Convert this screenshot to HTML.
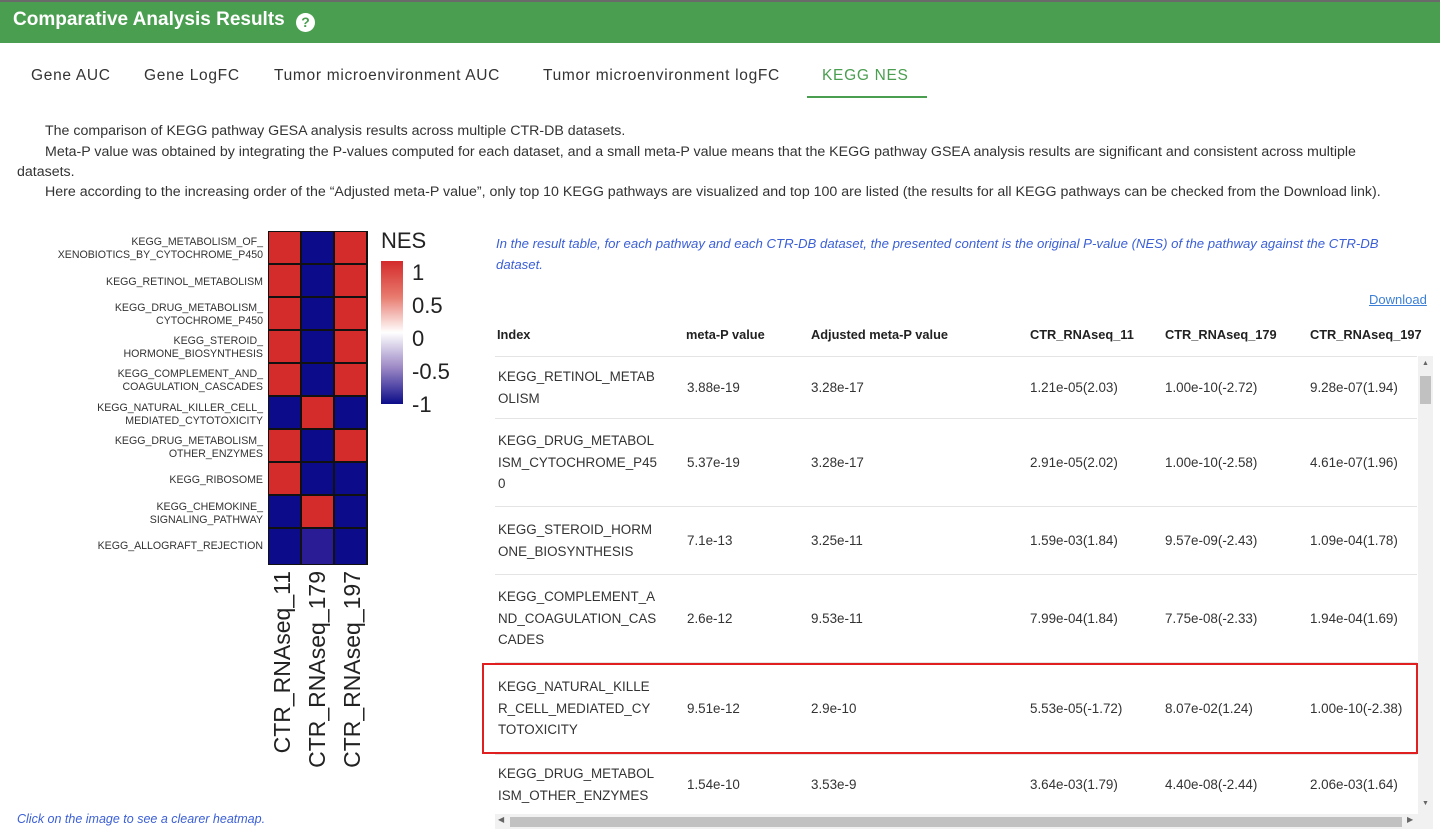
<!DOCTYPE html>
<html><head><meta charset="utf-8"><style>
*{margin:0;padding:0;box-sizing:border-box}
body{width:1440px;height:836px;overflow:hidden;background:#fff;font-family:"Liberation Sans",Arial,sans-serif;color:#333;position:relative}
.a{position:absolute;white-space:nowrap}
.hdr{left:0;top:0;width:1440px;height:43px;background:#4a9e50;border-top:2px solid #6a6a6a}
.tab{top:67px;font-size:15.5px;color:#333;letter-spacing:.7px}
.p{font-size:14.2px;color:#333}
.hl{font-size:10.6px;color:#333;text-align:right;line-height:13px;width:260px;left:3px}
.cell{position:absolute;width:33px;height:33px;border:1px solid #111}
.r{background:#d42b2b}.b{background:#0c0c8a}
.th{top:327px;font-size:12.8px;font-weight:bold;color:#222}
.row{position:absolute;left:495px;width:922px;display:flex;align-items:center;border-top:1px solid #e4e4e4;font-size:13.4px;color:#333}
.row div{position:absolute;line-height:21.5px}
</style></head><body>
<div class="a hdr"></div>
<div class="a" style="left:13px;top:9px;font-size:19px;font-weight:bold;color:#fff">Comparative Analysis Results</div>
<div class="a" style="left:296px;top:13px;width:19px;height:19px;border-radius:50%;background:#fff;color:#4a9e50;font-weight:bold;font-size:14px;text-align:center;line-height:19px">?</div>
<div class="a tab" style="left:31px">Gene AUC</div>
<div class="a tab" style="left:144px">Gene LogFC</div>
<div class="a tab" style="left:274px">Tumor microenvironment AUC</div>
<div class="a tab" style="left:543px">Tumor microenvironment logFC</div>
<div class="a tab" style="left:822px;color:#4a9e50">KEGG NES</div>
<div class="a" style="left:807px;top:96px;width:120px;height:2px;background:#4a9e50"></div>
<div class="a p" style="left:45px;top:123px">The comparison of KEGG pathway GESA analysis results across multiple CTR-DB datasets.</div>
<div class="a p" style="left:45px;top:144px">Meta-P value was obtained by integrating the P-values computed for each dataset, and a small meta-P value means that the KEGG pathway GSEA analysis results are significant and consistent across multiple</div>
<div class="a p" style="left:17px;top:164px">datasets.</div>
<div class="a p" style="left:45px;top:184px">Here according to the increasing order of the “Adjusted meta-P value”, only top 10 KEGG pathways are visualized and top 100 are listed (the results for all KEGG pathways can be checked from the Download link).</div>

<div class="a hl" style="top:236px">KEGG_METABOLISM_OF_<br>XENOBIOTICS_BY_CYTOCHROME_P450</div>
<div class="a hl" style="top:276px">KEGG_RETINOL_METABOLISM</div>
<div class="a hl" style="top:302px">KEGG_DRUG_METABOLISM_<br>CYTOCHROME_P450</div>
<div class="a hl" style="top:335px">KEGG_STEROID_<br>HORMONE_BIOSYNTHESIS</div>
<div class="a hl" style="top:368px">KEGG_COMPLEMENT_AND_<br>COAGULATION_CASCADES</div>
<div class="a hl" style="top:402px">KEGG_NATURAL_KILLER_CELL_<br>MEDIATED_CYTOTOXICITY</div>
<div class="a hl" style="top:435px">KEGG_DRUG_METABOLISM_<br>OTHER_ENZYMES</div>
<div class="a hl" style="top:474px">KEGG_RIBOSOME</div>
<div class="a hl" style="top:501px">KEGG_CHEMOKINE_<br>SIGNALING_PATHWAY</div>
<div class="a hl" style="top:540px">KEGG_ALLOGRAFT_REJECTION</div>

<div class="a" style="left:268px;top:231px;width:100px;height:334px;border:1px solid #111">
<div class="cell r" style="left:-1px;top:-1px"></div><div class="cell b" style="left:32px;top:-1px"></div><div class="cell r" style="left:65px;top:-1px"></div>
<div class="cell r" style="left:-1px;top:32px"></div><div class="cell b" style="left:32px;top:32px"></div><div class="cell r" style="left:65px;top:32px"></div>
<div class="cell r" style="left:-1px;top:65px"></div><div class="cell b" style="left:32px;top:65px"></div><div class="cell r" style="left:65px;top:65px"></div>
<div class="cell r" style="left:-1px;top:98px"></div><div class="cell b" style="left:32px;top:98px"></div><div class="cell r" style="left:65px;top:98px"></div>
<div class="cell r" style="left:-1px;top:131px"></div><div class="cell b" style="left:32px;top:131px"></div><div class="cell r" style="left:65px;top:131px"></div>
<div class="cell b" style="left:-1px;top:164px"></div><div class="cell r" style="left:32px;top:164px"></div><div class="cell b" style="left:65px;top:164px"></div>
<div class="cell r" style="left:-1px;top:197px"></div><div class="cell b" style="left:32px;top:197px"></div><div class="cell r" style="left:65px;top:197px"></div>
<div class="cell r" style="left:-1px;top:230px"></div><div class="cell b" style="left:32px;top:230px"></div><div class="cell b" style="left:65px;top:230px"></div>
<div class="cell b" style="left:-1px;top:263px"></div><div class="cell r" style="left:32px;top:263px"></div><div class="cell b" style="left:65px;top:263px"></div>
<div class="cell b" style="left:-1px;top:296px;height:37px"></div><div class="cell" style="left:32px;top:296px;height:37px;background:#2a1c94"></div><div class="cell b" style="left:65px;top:296px;height:37px"></div>
</div>
<div class="a" style="left:265px;top:571px;transform-origin:0 0;transform:rotate(-90deg) translate(-200px,0);font-size:23px;color:#222;line-height:35px;width:200px;text-align:right">CTR_RNAseq_11<br>CTR_RNAseq_179<br>CTR_RNAseq_197</div>

<div class="a" style="left:381px;top:228px;font-size:22px;color:#222">NES</div>
<div class="a" style="left:381px;top:261px;width:22px;height:143px;background:linear-gradient(#d42b2b 0%,#e87a6e 25%,#fff 50%,#9a86c4 75%,#0c0c8a 100%)"></div>
<div class="a" style="left:412px;top:256px;font-size:22px;color:#222;line-height:33px">1<br>0.5<br>0<br>-0.5<br>-1</div>

<div class="a" style="left:17px;top:812px;font-size:12.5px;font-style:italic;color:#3b5fd6">Click on the image to see a clearer heatmap.</div>

<div class="a" style="left:496px;top:233px;font-size:13.2px;font-style:italic;color:#3b5fd6;line-height:21px;white-space:normal;width:925px">In the result table, for each pathway and each CTR-DB dataset, the presented content is the original P-value (NES) of the pathway against the CTR-DB dataset.</div>
<div class="a" style="left:1369px;top:292px;font-size:13px;color:#3b7fd6;text-decoration:underline">Download</div>

<div class="a th" style="left:497px">Index</div>
<div class="a th" style="left:686px">meta-P value</div>
<div class="a th" style="left:811px">Adjusted meta-P value</div>
<div class="a th" style="left:1030px">CTR_RNAseq_11</div>
<div class="a th" style="left:1165px">CTR_RNAseq_179</div>
<div class="a th" style="left:1310px">CTR_RNAseq_197</div>

<div class="row" style="top:356px;height:62px"><div style="left:3px">KEGG_RETINOL_METAB<br>OLISM</div><div style="left:192px">3.88e-19</div><div style="left:316px">3.28e-17</div><div style="left:535px">1.21e-05(2.03)</div><div style="left:670px">1.00e-10(-2.72)</div><div style="left:815px">9.28e-07(1.94)</div></div>
<div class="row" style="top:418px;height:88px"><div style="left:3px">KEGG_DRUG_METABOL<br>ISM_CYTOCHROME_P45<br>0</div><div style="left:192px">5.37e-19</div><div style="left:316px">3.28e-17</div><div style="left:535px">2.91e-05(2.02)</div><div style="left:670px">1.00e-10(-2.58)</div><div style="left:815px">4.61e-07(1.96)</div></div>
<div class="row" style="top:506px;height:68px"><div style="left:3px">KEGG_STEROID_HORM<br>ONE_BIOSYNTHESIS</div><div style="left:192px">7.1e-13</div><div style="left:316px">3.25e-11</div><div style="left:535px">1.59e-03(1.84)</div><div style="left:670px">9.57e-09(-2.43)</div><div style="left:815px">1.09e-04(1.78)</div></div>
<div class="row" style="top:574px;height:88px"><div style="left:3px">KEGG_COMPLEMENT_A<br>ND_COAGULATION_CAS<br>CADES</div><div style="left:192px">2.6e-12</div><div style="left:316px">9.53e-11</div><div style="left:535px">7.99e-04(1.84)</div><div style="left:670px">7.75e-08(-2.33)</div><div style="left:815px">1.94e-04(1.69)</div></div>
<div class="row" style="top:662px;height:92px"><div style="left:3px">KEGG_NATURAL_KILLE<br>R_CELL_MEDIATED_CY<br>TOTOXICITY</div><div style="left:192px">9.51e-12</div><div style="left:316px">2.9e-10</div><div style="left:535px">5.53e-05(-1.72)</div><div style="left:670px">8.07e-02(1.24)</div><div style="left:815px">1.00e-10(-2.38)</div></div>
<div class="row" style="top:754px;height:60px"><div style="left:3px">KEGG_DRUG_METABOL<br>ISM_OTHER_ENZYMES</div><div style="left:192px">1.54e-10</div><div style="left:316px">3.53e-9</div><div style="left:535px">3.64e-03(1.79)</div><div style="left:670px">4.40e-08(-2.44)</div><div style="left:815px">2.06e-03(1.64)</div></div>
<div class="a" style="left:482px;top:663px;width:936px;height:91px;border:2px solid #e02020"></div>

<div class="a" style="left:1418px;top:356px;width:15px;height:458px;background:#f1f1f1"></div>
<div class="a" style="left:1420px;top:376px;width:11px;height:28px;background:#c1c1c1"></div>
<div class="a" style="left:1422px;top:360px;font-size:7px;color:#666">▲</div>
<div class="a" style="left:1422px;top:800px;font-size:7px;color:#666">▼</div>
<div class="a" style="left:495px;top:814px;width:938px;height:15px;background:#f1f1f1"></div>
<div class="a" style="left:510px;top:817px;width:892px;height:10px;background:#c1c1c1"></div>
<div class="a" style="left:498px;top:815px;font-size:8px;color:#666">◀</div>
<div class="a" style="left:1407px;top:815px;font-size:8px;color:#666">▶</div>
</body></html>
